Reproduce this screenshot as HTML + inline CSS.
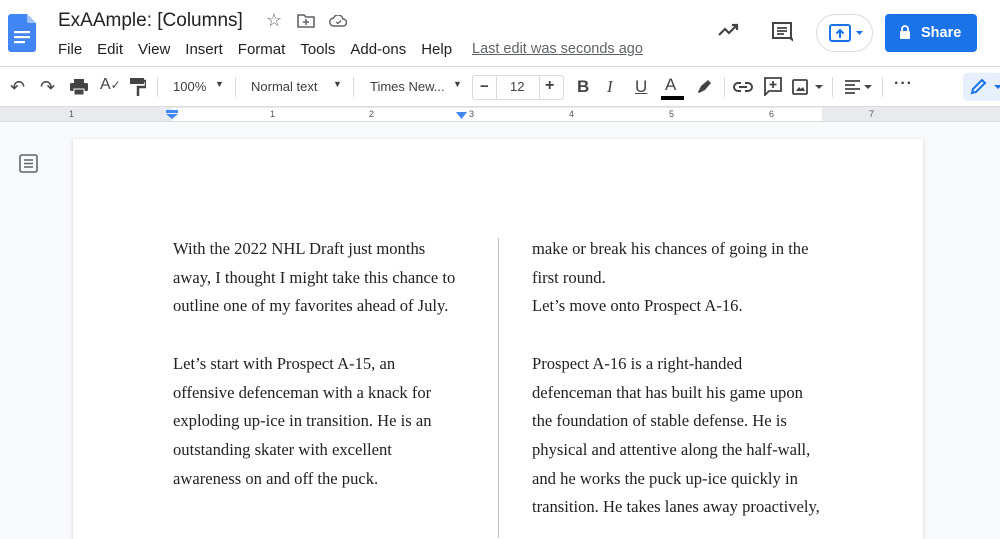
<!DOCTYPE html>
<html><head><style>
*{margin:0;padding:0;box-sizing:border-box}
body{width:1000px;height:525px;overflow:hidden;background:#f8f9fa;font-family:"Liberation Sans",Arial,sans-serif;position:relative;color:#3c4043}
.abs{position:absolute}
#top{left:0;top:0;width:1000px;height:66px;background:#fff}
#tb{left:0;top:66px;width:1000px;height:41px;background:#fff;border-top:1px solid #dadce0;border-bottom:1px solid #dadce0}
.menu span{margin-right:15px}
.ti{font-size:13px;color:#3c4043}
.sep{width:1px;height:20px;background:#dadce0;top:10px}
#ruler{left:0;top:107px;width:1000px;height:15px;background:#e8eaed;border-bottom:1px solid #dadce0}
#page{left:73px;top:139px;width:850px;height:400px;background:#fff;box-shadow:0 1px 3px rgba(60,64,67,.25)}
.col{font-family:"Liberation Serif","Times New Roman",serif;font-size:16.6px;line-height:28.7px;color:#222;width:340px;white-space:nowrap}
</style></head><body>
<div id="top" class="abs">
 <svg class="abs" style="left:8px;top:14px" width="28" height="38" viewBox="0 0 28 38"><path d="M3 0h16l9 9v26a3 3 0 0 1-3 3H3a3 3 0 0 1-3-3V3a3 3 0 0 1 3-3z" fill="#4285f4"/><path d="M19 0l9 9h-7a2 2 0 0 1-2-2z" fill="#a1c2fa"/><rect x="6" y="17" width="16" height="2.2" fill="#fff"/><rect x="6" y="22" width="16" height="2.2" fill="#fff"/><rect x="6" y="27" width="11" height="2.2" fill="#fff"/></svg>
 <div class="abs" style="left:58px;top:10px;font-size:19px;color:#202124">ExAAmple: [Columns]</div>
 <div class="abs" style="left:266px;top:10px;font-size:18px;color:#5f6368">☆</div>
 <svg class="abs" style="left:297px;top:14px" width="18" height="14" viewBox="0 0 18 14"><path d="M1 1h6l2 2h8v10H1z" fill="none" stroke="#5f6368" stroke-width="1.6"/><path d="M6 8h6M9 5v6" stroke="#5f6368" stroke-width="1.5"/></svg>
 <svg class="abs" style="left:329px;top:15px" width="18" height="12" viewBox="0 0 18 12"><path d="M5 11a4 4 0 0 1-.5-8A5 5 0 0 1 14 4a3.5 3.5 0 0 1 0 7z" fill="none" stroke="#5f6368" stroke-width="1.5"/><path d="M7 7l2 1.5 3-3" stroke="#5f6368" stroke-width="1.3" fill="none"/></svg>
 <div class="abs menu" style="left:58px;top:41px;font-size:15px;color:#202124"><span>File</span><span>Edit</span><span>View</span><span>Insert</span><span>Format</span><span>Tools</span><span>Add-ons</span><span>Help</span></div>
 <div class="abs" style="left:472px;top:41px;font-size:14.5px;color:#5f6368;text-decoration:underline">Last edit was seconds ago</div>
 <svg class="abs" style="left:718px;top:23px" width="22" height="14" viewBox="0 0 22 14"><path d="M1 12l6-6 4 4 8-8M14 2h5v5" fill="none" stroke="#444" stroke-width="2.2"/></svg>
 <svg class="abs" style="left:771px;top:21px" width="22" height="22" viewBox="0 0 22 22"><path d="M2 2h18v15l3 3-4-3H2z" fill="none" stroke="#444" stroke-width="2"/><path d="M6 7h10M6 10h10M6 13h7" stroke="#444" stroke-width="1.8"/></svg>
 <div class="abs" style="left:816px;top:14px;width:57px;height:38px;border:1px solid #dadce0;border-radius:19px"></div>
 <svg class="abs" style="left:829px;top:24px" width="36" height="18" viewBox="0 0 36 18"><rect x="1" y="1" width="20" height="16" rx="2" fill="none" stroke="#1a73e8" stroke-width="2"/><path d="M11 14V6M7.5 9.5L11 6l3.5 3.5" fill="none" stroke="#1a73e8" stroke-width="2"/><path d="M27 7l3.5 4L34 7z" fill="#1a73e8"/></svg>
 <div class="abs" style="left:885px;top:14px;width:92px;height:38px;background:#1a73e8;border-radius:4px;color:#fff;font-size:14.5px;font-weight:bold;line-height:38px;padding-left:36px">Share</div>
 <svg class="abs" style="left:899px;top:25px" width="12" height="14" viewBox="0 0 12 14"><path d="M3 6V4a3 3 0 0 1 6 0v2" fill="none" stroke="#fff" stroke-width="1.8"/><rect x="1" y="6" width="10" height="8" rx="1" fill="#fff"/></svg>
</div>
<div id="tb" class="abs">
 <div class="abs ti" style="left:10px;top:10px;font-size:18px;color:#444">↶</div>
 <div class="abs ti" style="left:40px;top:10px;font-size:18px;color:#444">↷</div>
 <svg class="abs" style="left:70px;top:12px" width="18" height="16" viewBox="0 0 18 16"><rect x="4" y="0" width="10" height="4" fill="#444"/><rect x="0" y="4" width="18" height="8" rx="1.5" fill="#444"/><rect x="4" y="10" width="10" height="6" fill="#444" stroke="#fff" stroke-width="1"/></svg>
 <div class="abs ti" style="left:100px;top:9px;font-size:16px;color:#444">A<span style="font-size:12px">✓</span></div>
 <svg class="abs" style="left:130px;top:11px" width="16" height="18" viewBox="0 0 16 18"><rect x="0" y="0" width="14" height="6" fill="#444"/><path d="M14 3h2v6H8v9" fill="none" stroke="#444" stroke-width="2.5"/></svg>
 <div class="abs sep" style="left:157px"></div>
 <div class="abs ti" style="left:173px;top:12px">100%</div><div class="abs ti" style="left:215px;top:12px;font-size:9px">▼</div>
 <div class="abs sep" style="left:235px"></div>
 <div class="abs ti" style="left:251px;top:12px">Normal text</div><div class="abs ti" style="left:333px;top:12px;font-size:9px">▼</div>
 <div class="abs sep" style="left:353px"></div>
 <div class="abs ti" style="left:370px;top:12px">Times New...</div><div class="abs ti" style="left:453px;top:12px;font-size:9px">▼</div>
 <div class="abs" style="left:472px;top:8px;width:92px;height:25px;border:1px solid #dadce0;border-radius:3px"></div>
 <div class="abs" style="left:496px;top:8px;width:44px;height:25px;border-left:1px solid #dadce0;border-right:1px solid #dadce0"></div>
 <div class="abs ti" style="left:480px;top:11px;font-size:15px;font-weight:bold">−</div>
 <div class="abs ti" style="left:510px;top:12px">12</div>
 <div class="abs ti" style="left:545px;top:10px;font-size:16px;font-weight:bold">+</div>
 <div class="abs" style="left:577px;top:10px;font-size:17px;font-weight:bold;color:#444">B</div>
 <div class="abs" style="left:607px;top:10px;font-size:17px;font-style:italic;font-family:'Liberation Serif';color:#444">I</div>
 <div class="abs" style="left:635px;top:10px;font-size:17px;text-decoration:underline;color:#444">U</div>
 <div class="abs" style="left:665px;top:8px;font-size:17px;color:#444">A</div>
 <div class="abs" style="left:661px;top:29px;width:23px;height:4px;background:#000"></div>
 <svg class="abs" style="left:695px;top:12px" width="18" height="16" viewBox="0 0 18 16"><path d="M3 13l3-6 7-6 3 3-6 7-6 3z" fill="#444"/></svg>
 <div class="abs sep" style="left:724px"></div>
 <svg class="abs" style="left:733px;top:14px" width="20" height="12" viewBox="0 0 20 12"><path d="M8 2H5a4 4 0 0 0 0 8h3M12 2h3a4 4 0 0 1 0 8h-3M6 6h8" fill="none" stroke="#444" stroke-width="2"/></svg>
 <svg class="abs" style="left:764px;top:10px" width="18" height="19" viewBox="0 0 18 19"><path d="M1 1h16v13H5l-4 4z" fill="none" stroke="#444" stroke-width="1.8"/><path d="M9 4v7M5.5 7.5h7" stroke="#444" stroke-width="1.8"/></svg>
 <svg class="abs" style="left:792px;top:12px" width="34" height="16" viewBox="0 0 34 16"><rect x="1" y="1" width="14" height="14" rx="1" fill="none" stroke="#444" stroke-width="1.8"/><path d="M4 12l3-4 2 2 2-2 2 4z" fill="#444"/><path d="M23 6l4 4 4-4z" fill="#444"/></svg>
 <div class="abs sep" style="left:832px"></div>
 <svg class="abs" style="left:845px;top:12px" width="30" height="16" viewBox="0 0 30 16"><path d="M0 2h15M0 6h10M0 10h15M0 14h10" stroke="#444" stroke-width="1.8"/><path d="M19 6l4 4 4-4z" fill="#444"/></svg>
 <div class="abs sep" style="left:882px"></div>
 <div class="abs ti" style="left:894px;top:8px;font-size:16px;font-weight:bold;letter-spacing:1px">···</div>
 <div class="abs" style="left:963px;top:6px;width:40px;height:28px;background:#e8f0fe;border-radius:4px"></div>
 <svg class="abs" style="left:970px;top:12px" width="30" height="16" viewBox="0 0 30 16"><path d="M2 14l1-4 9-9 3 3-9 9z" fill="none" stroke="#1a73e8" stroke-width="2"/><path d="M24 6l4 4 4-4z" fill="#1a73e8"/></svg>
</div>
<div id="ruler" class="abs">
 <div class="abs" style="left:172px;top:1px;width:650px;height:13px;background:#fff"></div>
 <div class="abs" style="left:0;top:0;width:1000px;font-size:9px;color:#555;line-height:15px">
  <span class="abs" style="left:69px">1</span><span class="abs" style="left:270px">1</span><span class="abs" style="left:369px">2</span><span class="abs" style="left:469px">3</span><span class="abs" style="left:569px">4</span><span class="abs" style="left:669px">5</span><span class="abs" style="left:769px">6</span><span class="abs" style="left:869px">7</span>
 </div>
 <svg class="abs" style="left:166px;top:3px" width="12" height="9"><rect x="0" y="0" width="12" height="3" fill="#4285f4"/><path d="M0 4h12l-6 5z" fill="#4285f4"/></svg>
 <svg class="abs" style="left:456px;top:5px" width="11" height="7"><path d="M0 0h11l-5.5 7z" fill="#4285f4"/></svg>
</div>
<svg class="abs" style="left:19px;top:154px" width="19" height="19" viewBox="0 0 19 19"><rect x="1" y="1" width="17" height="17" rx="2" fill="none" stroke="#5f6368" stroke-width="1.6"/><path d="M5 6h9M5 9.5h9M5 13h9" stroke="#5f6368" stroke-width="1.5"/></svg>
<div id="page" class="abs">
 <div class="abs" style="left:425px;top:99px;width:1px;height:300px;background:#c0c0c0"></div>
 <div class="abs col" style="left:100px;top:96px">With the 2022 NHL Draft just months<br>away, I thought I might take this chance to<br>outline one of my favorites ahead of July.<br><br>Let’s start with Prospect A-15, an<br>offensive defenceman with a knack for<br>exploding up-ice in transition. He is an<br>outstanding skater with excellent<br>awareness on and off the puck.</div>
 <div class="abs col" style="left:459px;top:96px">make or break his chances of going in the<br>first round.<br>Let’s move onto Prospect A-16.<br><br>Prospect A-16 is a right-handed<br>defenceman that has built his game upon<br>the foundation of stable defense. He is<br>physical and attentive along the half-wall,<br>and he works the puck up-ice quickly in<br>transition. He takes lanes away proactively,</div>
</div>
</body></html>
